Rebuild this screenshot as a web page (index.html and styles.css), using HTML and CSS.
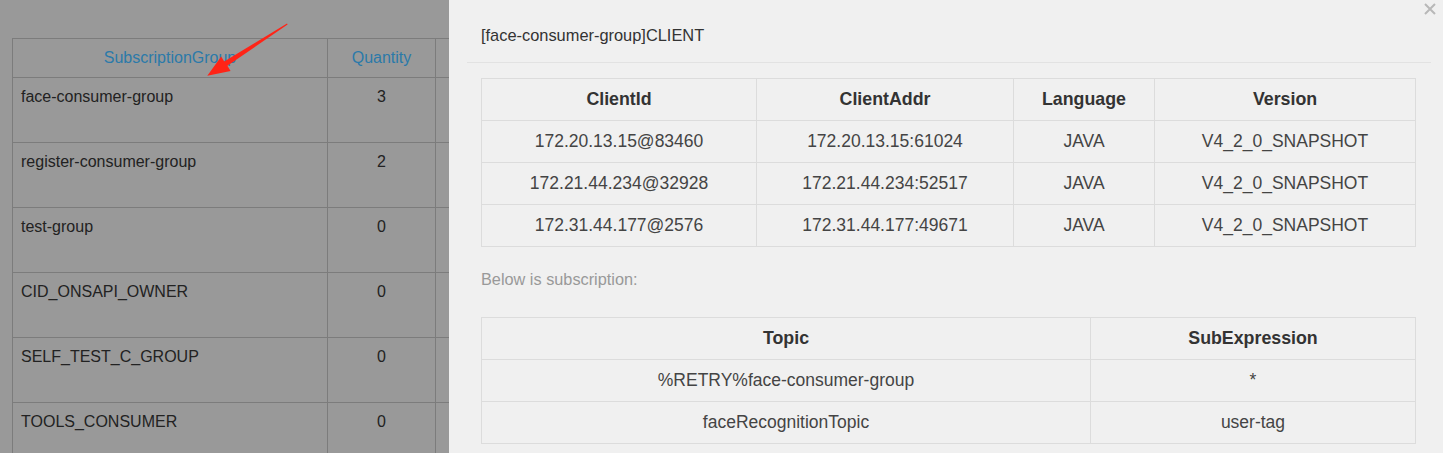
FILE: index.html
```html
<!DOCTYPE html>
<html>
<head>
<meta charset="utf-8">
<link rel="stylesheet" href="styles.css">
</head>
<body>
<div class="page">
  <table class="group-table">
    <colgroup><col class="c-name"><col class="c-qty"><col class="c-rest"></colgroup>
    <thead>
      <tr><th>SubscriptionGroup</th><th>Quantity</th><th></th></tr>
    </thead>
    <tbody>
      <tr><td class="name">face-consumer-group</td><td>3</td><td></td></tr>
      <tr><td class="name">register-consumer-group</td><td>2</td><td></td></tr>
      <tr><td class="name">test-group</td><td>0</td><td></td></tr>
      <tr><td class="name">CID_ONSAPI_OWNER</td><td>0</td><td></td></tr>
      <tr><td class="name">SELF_TEST_C_GROUP</td><td>0</td><td></td></tr>
      <tr><td class="name">TOOLS_CONSUMER</td><td>0</td><td></td></tr>
    </tbody>
  </table>
  <svg class="arrow" width="100" height="70" viewBox="195 15 100 70">
    <polygon points="287.6,24.5 227.4,65.8 230.6,71 207.3,75.7 221.2,56.6 224.2,61.6 287,23.5" fill="#ff2417"/>
  </svg>
</div>

<div class="drawer">
  <svg class="close" width="12" height="12" viewBox="0 0 12 12">
    <path d="M1 1 L11 11 M11 1 L1 11" stroke="#b8b8b8" stroke-width="2"/>
  </svg>
  <div class="drawer-header">[face-consumer-group]CLIENT</div>
  <div class="drawer-body">
    <table class="info-table">
      <colgroup><col style="width:275px"><col style="width:257px"><col style="width:141px"><col style="width:261px"></colgroup>
      <thead>
        <tr><th>ClientId</th><th>ClientAddr</th><th>Language</th><th>Version</th></tr>
      </thead>
      <tbody>
        <tr><td>172.20.13.15@83460</td><td>172.20.13.15:61024</td><td>JAVA</td><td>V4_2_0_SNAPSHOT</td></tr>
        <tr><td>172.21.44.234@32928</td><td>172.21.44.234:52517</td><td>JAVA</td><td>V4_2_0_SNAPSHOT</td></tr>
        <tr><td>172.31.44.177@2576</td><td>172.31.44.177:49671</td><td>JAVA</td><td>V4_2_0_SNAPSHOT</td></tr>
      </tbody>
    </table>
    <p class="sub-label">Below is subscription:</p>
    <table class="info-table sub-table">
      <colgroup><col style="width:609px"><col style="width:325px"></colgroup>
      <thead>
        <tr><th>Topic</th><th>SubExpression</th></tr>
      </thead>
      <tbody>
        <tr><td>%RETRY%face-consumer-group</td><td>*</td></tr>
        <tr><td>faceRecognitionTopic</td><td>user-tag</td></tr>
      </tbody>
    </table>
  </div>
</div>
</body>
</html>
```
FILE: styles.css
```css
* { box-sizing: border-box; }
html, body {
  margin: 0;
  height: 100%;
  overflow: hidden;
}
body {
  background: #999999;
  font-family: "Liberation Sans", Arial, sans-serif;
  font-size: 16px;
  color: #222;
}
.page {
  position: relative;
  padding: 38px 0 0 12px;
}
.group-table {
  border-collapse: collapse;
  table-layout: fixed;
  width: 900px;
}
.group-table .c-name { width: 315px; }
.group-table .c-qty { width: 108px; }
.group-table .c-rest { width: 477px; }
.group-table th,
.group-table td {
  border: 1px solid #7c7c7c;
  padding: 8px;
  line-height: 22px;
}
.group-table th {
  height: 39px;
  padding: 7px 8px;
  font-weight: normal;
  color: #2b7aa9;
  text-align: center;
  vertical-align: middle;
}
.group-table td {
  height: 65px;
  vertical-align: top;
  text-align: center;
  color: #222;
}
.group-table td.name { text-align: left; }
.arrow {
  position: absolute;
  left: 195px;
  top: 15px;
}
.drawer {
  position: fixed;
  top: 0;
  right: 0;
  bottom: 0;
  width: 994px;
  background: #f0f0f0;
}
.close {
  position: absolute;
  top: 3px;
  right: 7px;
}
.drawer-header {
  margin: 0 12px 0 18px;
  padding: 24px 14px 16px;
  font-size: 16.4px;
  line-height: 22px;
  color: #333;
  border-bottom: 1px solid #e2e2e2;
}
.drawer-body {
  padding: 15px 28px 0 32px;
}
.info-table {
  border-collapse: collapse;
  table-layout: fixed;
  width: 934px;
}
.info-table th,
.info-table td {
  border: 1px solid #dcdcdc;
  padding: 10px 4px;
  line-height: 21px;
  height: 42px;
  text-align: center;
  vertical-align: middle;
}
.info-table th {
  font-size: 17.8px;
  font-weight: bold;
  color: #333;
}
.info-table td {
  font-size: 17.5px;
  color: #444;
}
.sub-label {
  margin: 21px 0 27px;
  font-size: 16.3px;
  line-height: 22px;
  color: #999;
}
```
